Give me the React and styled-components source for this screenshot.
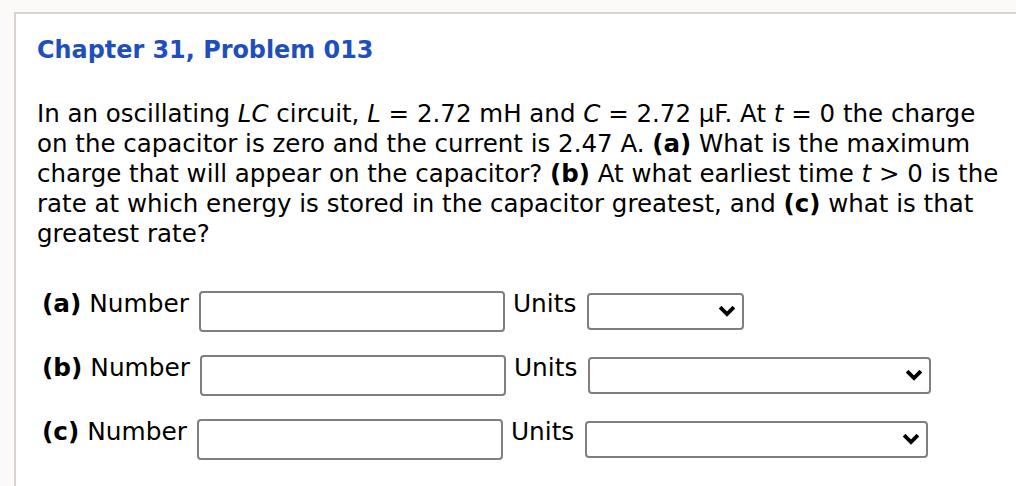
import React from "react";
import styled, { createGlobalStyle } from "styled-components";

const Global = createGlobalStyle`
  html, body { margin: 0; padding: 0; background: #fbfaf8; }
  body { font-family: "DejaVu Sans", Verdana, sans-serif; color: #000; }
`;

const Page = styled.div`
  padding: 12px 0 0 14px;
  height: 486px;
  box-sizing: border-box;
  overflow: hidden;
`;

const Panel = styled.div`
  background: #fff;
  border-top: 2px solid #dcd3cc;
  border-left: 2px solid #dcd3cc;
  height: 100%;
  box-sizing: border-box;
  padding: 21px 14px 0 21px;
`;

const Title = styled.h1`
  margin: 0;
  font-size: 23.9px;
  line-height: 30px;
  font-weight: bold;
  color: #1f4fbd;
`;

const Question = styled.p`
  margin: 34px 0 0 0;
  font-size: 24.5px;
  line-height: 30px;
`;

const Form = styled.div`
  margin-top: 40px;
  display: flex;
  flex-direction: column;
  gap: 20px;
  padding-left: 5px;
`;

const Row = styled.div`
  display: flex;
  align-items: flex-start;
  height: 44px;
`;

const Label = styled.span`
  font-size: 24.8px;
  line-height: 30px;
  margin-right: ${(p) => p.$gap}px;
  white-space: nowrap;
`;

const NumberInput = styled.input`
  margin-top: 2px;
  width: 306px;
  height: 41px;
  box-sizing: border-box;
  border: 2px solid #7f7f7f;
  border-radius: 4px;
  background: #fff;
  font-size: 22px;
  padding: 0 8px;
  margin-right: 8px;
  outline: none;
`;

const SelectWrap = styled.div`
  position: relative;
  margin-top: 4px;
  width: ${(p) => p.$width}px;
  height: 37px;
`;

const Select = styled.select`
  appearance: none;
  -webkit-appearance: none;
  width: 100%;
  height: 100%;
  box-sizing: border-box;
  border: 2px solid #7f7f7f;
  border-radius: 4px;
  background: #fff;
  font-size: 20px;
  outline: none;
`;

const Chevron = styled.svg`
  position: absolute;
  right: 9px;
  top: 13px;
  pointer-events: none;
`;

const rows = [
  { key: "a", width: 157 },
  { key: "b", width: 343 },
  { key: "c", width: 343 },
];

function AnswerRow({ part, width }) {
  return (
    <Row>
      <Label $gap={10}>
        <b>({part})</b> Number
      </Label>
      <NumberInput type="text" aria-label={`(${part}) Number`} />
      <Label $gap={11}>Units</Label>
      <SelectWrap $width={width}>
        <Select aria-label={`(${part}) Units`}>
          <option value=""></option>
        </Select>
        <Chevron width="16" height="12" viewBox="0 0 16 12">
          <path d="M2.5 2.5 L8 8 L13.5 2.5" fill="none" stroke="#000" strokeWidth="3.8" strokeLinecap="square" />
        </Chevron>
      </SelectWrap>
    </Row>
  );
}

export default function App() {
  return (
    <>
      <Global />
      <Page>
        <Panel>
          <Title>Chapter 31, Problem 013</Title>
          <Question>
            In an oscillating <i>LC</i> circuit, <i>L</i> = 2.72 mH and <i>C</i> = 2.72 μF. At{" "}
            <i>t</i> = 0 the charge on the capacitor is zero and the current is 2.47 A.{" "}
            <b>(a)</b> What is the maximum charge that will appear on the capacitor?{" "}
            <b>(b)</b> At what earliest time <i>t</i> &gt; 0 is the rate at which energy is
            stored in the capacitor greatest, and <b>(c)</b> what is that greatest rate?
          </Question>
          <Form>
            {rows.map((r) => (
              <AnswerRow key={r.key} part={r.key} width={r.width} />
            ))}
          </Form>
        </Panel>
      </Page>
    </>
  );
}
